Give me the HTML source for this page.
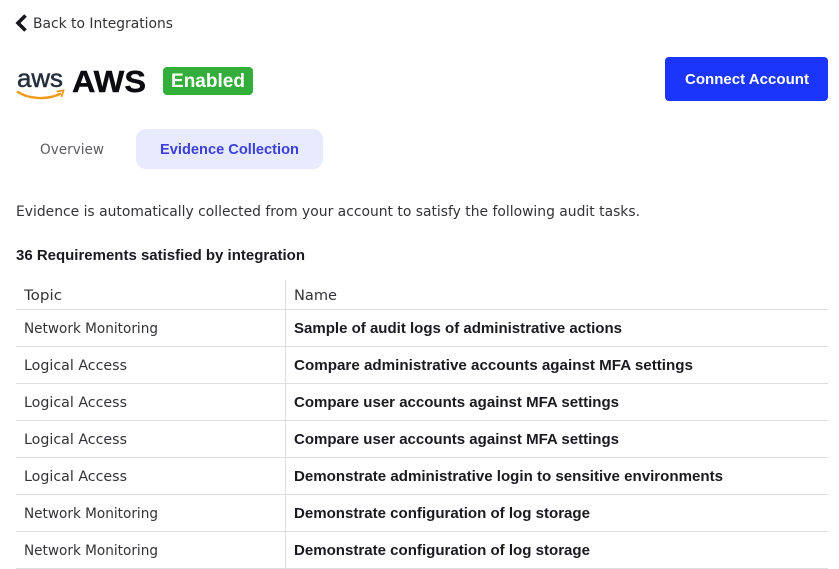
<!DOCTYPE html>
<html><head><meta charset="utf-8"><style>
html,body{margin:0;padding:0;background:#fff;width:839px;height:569px;overflow:hidden}
svg{display:block}
text{font-family:"DejaVu Sans","Liberation Sans",sans-serif;font-size:14px;fill:#333337}
.b{font-family:"Liberation Sans",sans-serif;font-weight:700;fill:#1a1a1f;font-size:15px}
.l{stroke:#dedede;stroke-width:1}
</style></head><body>
<svg width="839" height="569" viewBox="0 0 839 569" xmlns="http://www.w3.org/2000/svg">
<path d="M25.500 15.500L18 23L25.500 30.500" fill="none" stroke="#17171b" stroke-width="3.600"/>
<text x="33" y="28" textLength="140" lengthAdjust="spacingAndGlyphs">Back to Integrations</text>

<text x="17" y="87" textLength="46" lengthAdjust="spacingAndGlyphs" style="font-family:'Liberation Sans',sans-serif;font-size:25px;fill:#252f3e;stroke:#252f3e;stroke-width:.5">aws</text>
<path d="M17 91.500C28 99 47 100.500 61 93.500" fill="none" stroke="#f09a1a" stroke-width="2.400"/>
<path d="M56.500 91.500L63.500 90.500L61.500 97" fill="none" stroke="#f09a1a" stroke-width="1.800"/>
<text x="72" y="92" textLength="74" lengthAdjust="spacingAndGlyphs" style="font-family:'Liberation Sans',sans-serif;font-size:31px;font-weight:700;fill:#0b0b10;stroke:#0b0b10;stroke-width:.4">AWS</text>

<rect x="163" y="67" width="90" height="28" rx="4" fill="#33ae3a"/>
<text x="171" y="87" textLength="74" lengthAdjust="spacingAndGlyphs" style="font-family:'Liberation Sans',sans-serif;font-size:19.500px;font-weight:700;fill:#fff">Enabled</text>

<rect x="665" y="57" width="163" height="44" rx="4" fill="#1c35fb"/>
<text x="685" y="84" textLength="124" lengthAdjust="spacingAndGlyphs" class="b" style="font-size:15px;fill:#fff">Connect Account</text>

<text x="40" y="154" textLength="64" lengthAdjust="spacingAndGlyphs" style="fill:#5c5c60">Overview</text>
<rect x="136" y="129" width="187" height="40" rx="10" fill="#e8eafd"/>
<text x="160" y="154" textLength="139" lengthAdjust="spacingAndGlyphs" class="b" style="font-size:15px;fill:#3a40d8">Evidence Collection</text>

<text x="16" y="216" textLength="624" lengthAdjust="spacingAndGlyphs">Evidence is automatically collected from your account to satisfy the following audit tasks.</text>
<text x="16" y="260" textLength="289" lengthAdjust="spacingAndGlyphs" class="b">36 Requirements satisfied by integration</text>

<line class="l" x1="285.500" y1="280" x2="285.500" y2="569"/>
<line class="l" x1="16" y1="309.500" x2="828" y2="309.500"/>
<line class="l" x1="16" y1="346.500" x2="828" y2="346.500"/>
<line class="l" x1="16" y1="383.500" x2="828" y2="383.500"/>
<line class="l" x1="16" y1="420.500" x2="828" y2="420.500"/>
<line class="l" x1="16" y1="457.500" x2="828" y2="457.500"/>
<line class="l" x1="16" y1="494.500" x2="828" y2="494.500"/>
<line class="l" x1="16" y1="531.500" x2="828" y2="531.500"/>
<line class="l" x1="16" y1="568.500" x2="828" y2="568.500"/>

<text x="24" y="300" textLength="38" lengthAdjust="spacingAndGlyphs">Topic</text>
<text x="294" y="300" textLength="43" lengthAdjust="spacingAndGlyphs">Name</text>

<text x="24" y="333" textLength="134" lengthAdjust="spacingAndGlyphs">Network Monitoring</text>
<text x="294" y="333" textLength="328" lengthAdjust="spacingAndGlyphs" class="b">Sample of audit logs of administrative actions</text>
<text x="24" y="370" textLength="103" lengthAdjust="spacingAndGlyphs">Logical Access</text>
<text x="294" y="370" textLength="399" lengthAdjust="spacingAndGlyphs" class="b">Compare administrative accounts against MFA settings</text>
<text x="24" y="407" textLength="103" lengthAdjust="spacingAndGlyphs">Logical Access</text>
<text x="294" y="407" textLength="325" lengthAdjust="spacingAndGlyphs" class="b">Compare user accounts against MFA settings</text>
<text x="24" y="444" textLength="103" lengthAdjust="spacingAndGlyphs">Logical Access</text>
<text x="294" y="444" textLength="325" lengthAdjust="spacingAndGlyphs" class="b">Compare user accounts against MFA settings</text>
<text x="24" y="481" textLength="103" lengthAdjust="spacingAndGlyphs">Logical Access</text>
<text x="294" y="481" textLength="429" lengthAdjust="spacingAndGlyphs" class="b">Demonstrate administrative login to sensitive environments</text>
<text x="24" y="518" textLength="134" lengthAdjust="spacingAndGlyphs">Network Monitoring</text>
<text x="294" y="518" textLength="296" lengthAdjust="spacingAndGlyphs" class="b">Demonstrate configuration of log storage</text>
<text x="24" y="555" textLength="134" lengthAdjust="spacingAndGlyphs">Network Monitoring</text>
<text x="294" y="555" textLength="296" lengthAdjust="spacingAndGlyphs" class="b">Demonstrate configuration of log storage</text>
</svg>
</body></html>
